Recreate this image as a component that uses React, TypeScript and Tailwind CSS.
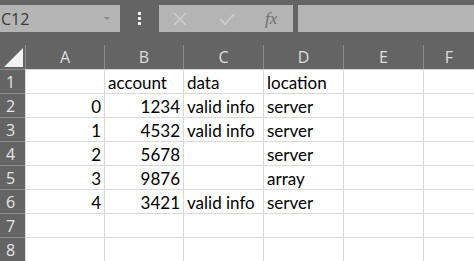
import React from 'react';

const cols = ['A', 'B', 'C', 'D', 'E', 'F'];
const widths = ['w-[79px]', 'w-[79px]', 'w-[80px]', 'w-[80px]', 'w-[80px]', 'flex-1'];

const rows: (string | number)[][] = [
    ['', 'account', 'data', 'location', '', ''],
    [0, 1234, 'valid info', 'server', '', ''],
    [1, 4532, 'valid info', 'server', '', ''],
    [2, 5678, '', 'server', '', ''],
    [3, 9876, '', 'array', '', ''],
    [4, 3421, 'valid info', 'server', '', ''],
    ['', '', '', '', '', ''],
    ['', '', '', '', '', ''],
];

const App = () => {
    return (
        <div className="w-[474px] h-[261px] overflow-hidden bg-[#646464] font-['Open_Sans',sans-serif]">
            {/* formula bar */}
            <div className="h-[45px] flex items-start pt-[5px]">
                <div className="w-[120px] h-[27px] bg-[#b4b4b4] flex items-center justify-between pl-[1px] pr-[10px]">
                    <span className="text-[16px] text-[#383838] leading-none">C12</span>
                    <span className="w-0 h-0 border-l-[3px] border-r-[3px] border-t-[3px] border-l-transparent border-r-transparent border-t-[#8a8a8a]"></span>
                </div>
                <div className="w-[39px] h-[27px] flex flex-col items-center justify-center gap-[2px]">
                    <span className="w-[3px] h-[3px] bg-[#f0f0f0]"></span>
                    <span className="w-[3px] h-[3px] bg-[#f0f0f0]"></span>
                    <span className="w-[3px] h-[3px] bg-[#f0f0f0]"></span>
                </div>
                <div className="w-[134px] h-[27px] bg-[#b4b4b4] flex items-center">
                    <svg width="14" height="14" viewBox="0 0 14 14" className="ml-[14px]">
                        <path d="M1 1 L13 13 M13 1 L1 13" stroke="#cdcdcd" strokeWidth="1.6" fill="none" />
                    </svg>
                    <svg width="16" height="14" viewBox="0 0 16 14" className="ml-[32px]">
                        <path d="M1 7 L6 12 L15 2" stroke="#cdcdcd" strokeWidth="1.8" fill="none" />
                    </svg>
                    <span className="ml-[30px] text-[17px] italic text-[#6e6e6e] font-['Liberation_Serif',serif] leading-none">fx</span>
                </div>
                <div className="ml-[5px] flex-1 h-[27px] bg-[#b4b4b4]"></div>
            </div>

            {/* column headers */}
            <div className="flex h-[24px]">
                <div className="w-[25px] flex items-end justify-end pr-[2px] pb-[2px]">
                    <div className="w-0 h-0 border-l-[19px] border-t-[19px] border-l-transparent border-t-transparent border-b-0 border-r-0 relative">
                        <svg width="19" height="19" viewBox="0 0 19 19" className="absolute left-[-19px] top-[-19px]">
                            <path d="M19 0 L19 19 L0 19 Z" fill="#f2f2f2" />
                        </svg>
                    </div>
                </div>
                {cols.map((c, i) => (
                    <div key={c} className={`${widths[i]} border-l border-[#8c8c8c] flex items-center justify-center text-[16px] text-[#dedede]`}>
                        {c}
                    </div>
                ))}
            </div>

            {/* rows */}
            {rows.map((r, ri) => (
                <div key={ri} className="flex h-[24px]">
                    <div className="w-[25px] border-t border-[#8c8c8c] pl-[6px] flex items-center text-[16px] text-[#e6e6e6]">
                        {ri + 1}
                    </div>
                    {r.map((v, ci) => (
                        <div
                            key={ci}
                            className={`${widths[ci]} bg-white border-l border-t border-[#d9d9d9] flex items-center px-[3px] pt-[2px] font-['Lato',sans-serif] text-[17px] text-black ${typeof v === 'number' ? 'justify-end' : 'justify-start'} whitespace-nowrap overflow-visible`}
                        >
                            {v}
                        </div>
                    ))}
                </div>
            ))}
        </div>
    );
};

export default App;
